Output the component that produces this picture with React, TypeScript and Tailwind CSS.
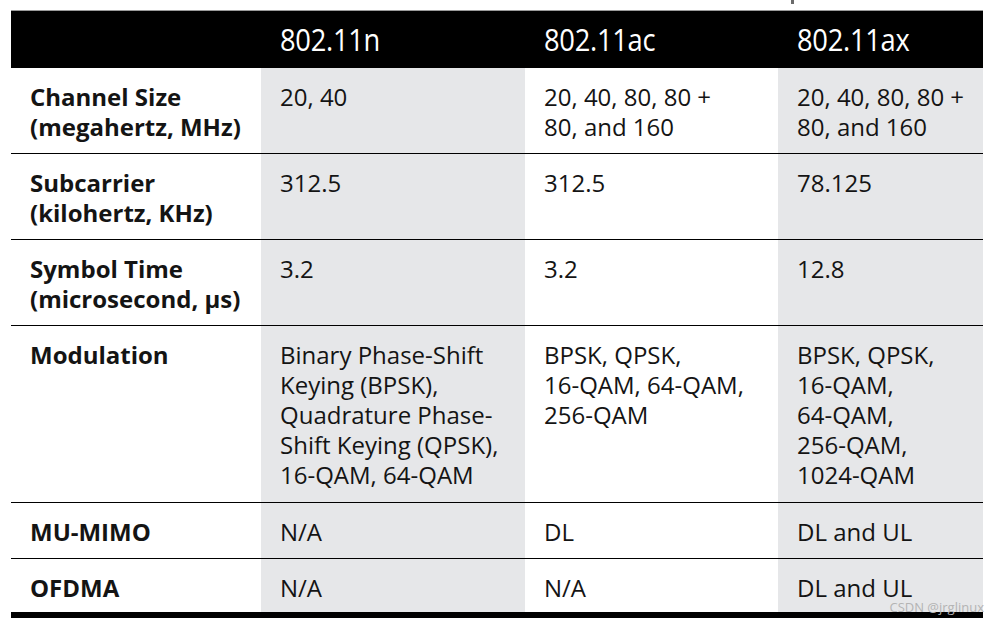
const rows: { label: string[]; cells: string[][]; h: string; last?: boolean }[] = [
    {
        label: ["Channel Size", "(megahertz, MHz)"],
        cells: [["20, 40"], ["20, 40, 80, 80 +", "80, and 160"], ["20, 40, 80, 80 +", "80, and 160"]],
        h: "h-[86px]",
    },
    {
        label: ["Subcarrier", "(kilohertz, KHz)"],
        cells: [["312.5"], ["312.5"], ["78.125"]],
        h: "h-[86px]",
    },
    {
        label: ["Symbol Time", "(microsecond, μs)"],
        cells: [["3.2"], ["3.2"], ["12.8"]],
        h: "h-[86px]",
    },
    {
        label: ["Modulation"],
        cells: [
            ["Binary Phase-Shift", "Keying (BPSK),", "Quadrature Phase-", "Shift Keying (QPSK),", "16-QAM, 64-QAM"],
            ["BPSK, QPSK,", "16-QAM, 64-QAM,", "256-QAM"],
            ["BPSK, QPSK,", "16-QAM,", "64-QAM,", "256-QAM,", "1024-QAM"],
        ],
        h: "h-[177px]",
    },
    {
        label: ["MU-MIMO"],
        cells: [["N/A"], ["DL"], ["DL and UL"]],
        h: "h-[56px]",
    },
    {
        label: ["OFDMA"],
        cells: [["N/A"], ["N/A"], ["DL and UL"]],
        h: "h-[53px]",
        last: true,
    },
];

const cols = ["w-[264px] bg-[#e6e7e9]", "w-[253px] bg-white", "w-[205px] bg-[#e6e7e9]"];

function Lines({ lines }: { lines: string[] }) {
    return (
        <>
            {lines.map((l, i) => (
                <div key={i} className="whitespace-nowrap">
                    {l}
                </div>
            ))}
        </>
    );
}

export default function App() {
    return (
        <div
            className="relative w-[999px] h-[626px] bg-white text-[#141414] overflow-hidden"
            style={{ fontFamily: '"Open Sans", "Liberation Sans", sans-serif' }}
        >
            <div className="absolute left-[791px] top-0 w-[3px] h-[4px] bg-[#6b6b6b]" />
            <div className="pt-[10px] pl-[11px]">
                <div className="w-[972px]">
                    <div className="flex h-[58px] bg-black border-t border-[#9a9a9a] text-white text-[31px]">
                        <div className="w-[250px]" />
                        {["802.11n", "802.11ac", "802.11ax"].map((t, i) => (
                            <div key={t} className={`${["w-[264px]", "w-[253px]", "w-[205px]"][i]} pl-[19px] pt-[8px] leading-[40px]`}>
                                <span className="inline-block origin-left scale-x-[0.88] tracking-[-0.3px]">{t}</span>
                            </div>
                        ))}
                    </div>
                    {rows.map((r) => (
                        <div key={r.label[0]} className={`flex ${r.h} text-[24px] leading-[30px] ${r.last ? "" : "border-b border-black"}`}>
                            <div className="w-[250px] pl-[19px] pt-[14px] font-bold">
                                <Lines lines={r.label} />
                            </div>
                            {r.cells.map((c, i) => (
                                <div key={i} className={`${cols[i]} pl-[19px] pt-[14px]`}>
                                    <Lines lines={c} />
                                </div>
                            ))}
                        </div>
                    ))}
                    <div className="h-[6px] bg-black" />
                </div>
            </div>
            <div className="absolute right-[15px] top-[601px] text-[13px] text-[#b4b4b4] leading-none">CSDN @jrglinux</div>
        </div>
    );
}
